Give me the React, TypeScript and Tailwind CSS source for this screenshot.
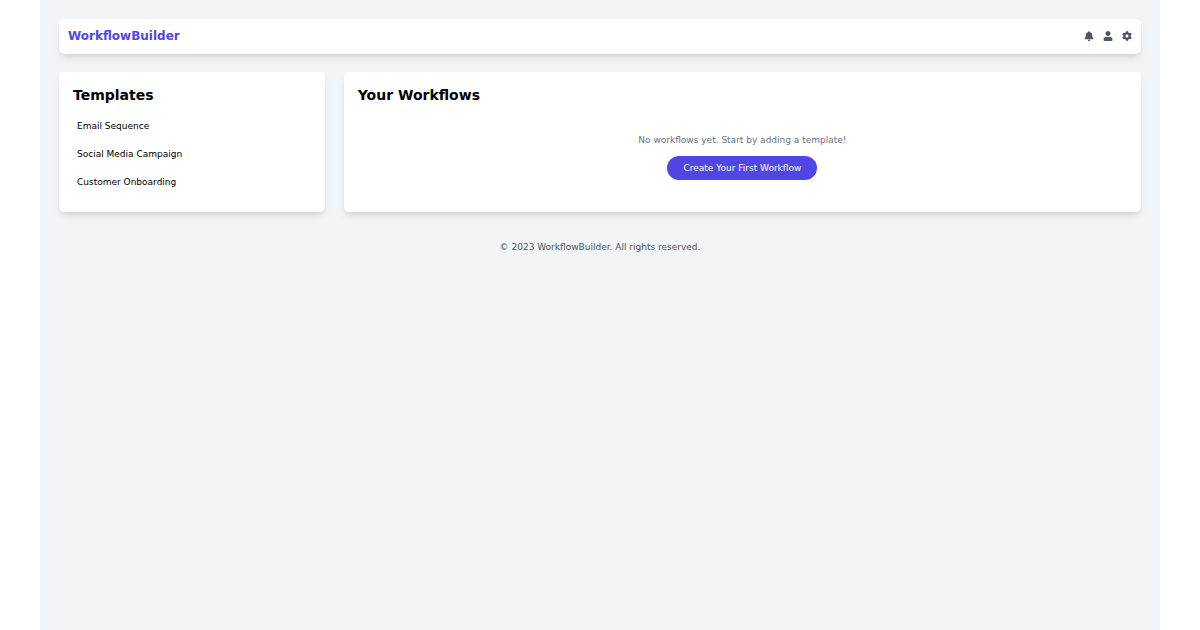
import React from 'react';
import { FaBell, FaCog, FaUser } from 'react-icons/fa';

const templates = ['Email Sequence', 'Social Media Campaign', 'Customer Onboarding'];

const actions = [
  { label: 'Notifications', Icon: FaBell },
  { label: 'Account', Icon: FaUser },
  { label: 'Settings', Icon: FaCog },
];

const Header: React.FC = () => (
  <header className="flex items-center justify-between px-[9px] pt-[9px] pb-[10px] bg-white rounded-[5px] shadow-[0_6px_9px_-2px_rgba(0,0,0,0.1),0_2px_4px_-2px_rgba(0,0,0,0.1)]">
    <h1 className="text-[12px] leading-[16px] font-bold text-[#4f46e5]">WorkflowBuilder</h1>
    <nav className="flex gap-[9px]">
      {actions.map(({ label, Icon }) => (
        <button key={label} type="button" aria-label={label} className="flex text-[10px] text-[#4b5563] cursor-pointer">
          <Icon />
        </button>
      ))}
    </nav>
  </header>
);

const App: React.FC = () => {
  return (
    <div className="min-h-screen bg-white px-[40px] flex flex-col">
      <div
        className="grow bg-[#f3f4f6] px-[19px] pt-[19px] text-[9px] leading-[14px] text-black"
        style={{ fontFamily: '"DejaVu Sans", sans-serif' }}
      >
        <Header />

        <main className="grid grid-cols-[1fr_3fr] gap-[19px] mt-[18px]">
          <section className="p-[14px] bg-white rounded-[5px] shadow-[0_6px_9px_-2px_rgba(0,0,0,0.1),0_2px_4px_-2px_rgba(0,0,0,0.1)]">
            <h2 className="mb-[9px] text-[14px] leading-[19px] font-bold">Templates</h2>
            <ul>
              {templates.map((name) => (
                <li key={name} className="mb-[4px] px-[4px] py-[5px] rounded-[2px] cursor-pointer">
                  {name}
                </li>
              ))}
            </ul>
          </section>

          <section className="p-[14px] bg-white rounded-[5px] shadow-[0_6px_9px_-2px_rgba(0,0,0,0.1),0_2px_4px_-2px_rgba(0,0,0,0.1)]">
            <h2 className="mb-[9px] text-[14px] leading-[19px] font-bold">Your Workflows</h2>
            <div className="flex flex-col items-center pt-[19px] pb-[18px]">
              <p className="mb-[9px] text-[#6b7280]">No workflows yet. Start by adding a template!</p>
              <button
                type="button"
                className="px-[16px] py-[5px] bg-[#4f46e5] text-white rounded-full cursor-pointer"
              >
                Create Your First Workflow
              </button>
            </div>
          </section>
        </main>

        <footer className="mt-[19px] p-[9px] text-center text-[#4b5563]">
          © 2023 WorkflowBuilder. All rights reserved.
        </footer>
      </div>
    </div>
  );
};

export default App;
